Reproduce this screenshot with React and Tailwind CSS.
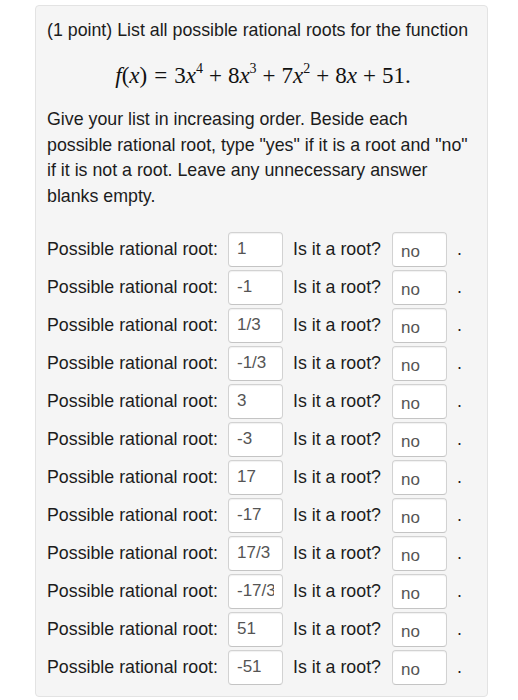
import React from "react";

const roots = ["1", "-1", "1/3", "-1/3", "3", "-3", "17", "-17", "17/3", "-17/3", "51", "-51"];

function Box({ value, low }) {
  return (
    <div
      className={
        "w-[55px] h-[35px] shrink-0 rounded-[4px] border border-[#d2d2d2] border-b-[#c4c4c4] bg-white shadow-[inset_0_1px_1px_rgba(0,0,0,0.06)] px-[8px] text-[17px] text-[#555] " +
        (low ? "pt-[8px] leading-[22px]" : "pt-[5px] leading-[22px]")
      }
    >
      <div className="overflow-hidden whitespace-nowrap">{value}</div>
    </div>
  );
}

function Sup({ children }) {
  return <span className="relative -top-[10px] text-[14px]">{children}</span>;
}

export default function App() {
  return (
    <div className="min-h-[700px] bg-white pt-[5px] pl-[35px] font-['Liberation_Sans',Arial,sans-serif] text-[#1c1c1c]">
      <div className="w-[453px] h-[692px] rounded-[4px] border border-[#e3e3e3] bg-[#f5f5f5] pl-[11px] pr-[8px] pt-[12px]">
        <p className="text-[17.8px] leading-[25px] whitespace-nowrap">(1 point) List all possible rational roots for the function</p>

        <div className="mt-[20px] mb-[15px] flex justify-center items-baseline font-['Liberation_Serif','Times_New_Roman',serif] text-[23px] leading-[26px] text-[#111]">
          <span>
            <i>f</i>(<i>x</i>)
          </span>
          <span className="mx-[7px]">=</span>
          <span>
            3<i>x</i>
            <Sup>4</Sup>
          </span>
          <span className="mx-[6px]">+</span>
          <span>
            8<i>x</i>
            <Sup>3</Sup>
          </span>
          <span className="mx-[6px]">+</span>
          <span>
            7<i>x</i>
            <Sup>2</Sup>
          </span>
          <span className="mx-[6px]">+</span>
          <span>
            8<i>x</i>
          </span>
          <span className="mx-[6px]">+</span>
          <span>51.</span>
        </div>

        <p className="text-[17.8px] leading-[25.7px] whitespace-nowrap">
          Give your list in increasing order. Beside each
          <br />
          possible rational root, type "yes" if it is a root and "no"
          <br />
          if it is not a root. Leave any unnecessary answer
          <br />
          blanks empty.
        </p>

        <div className="mt-[21px] flex flex-col">
          {roots.map((r) => (
            <div key={r} className="flex h-[38px] items-center text-[17.8px]">
              <span className="w-[181px] shrink-0">Possible rational root:</span>
              <Box value={r} />
              <span className="ml-[10px] w-[99px] shrink-0">Is it a root?</span>
              <Box value="no" low />
              <span className="ml-[10px]">.</span>
            </div>
          ))}
        </div>
      </div>
    </div>
  );
}
